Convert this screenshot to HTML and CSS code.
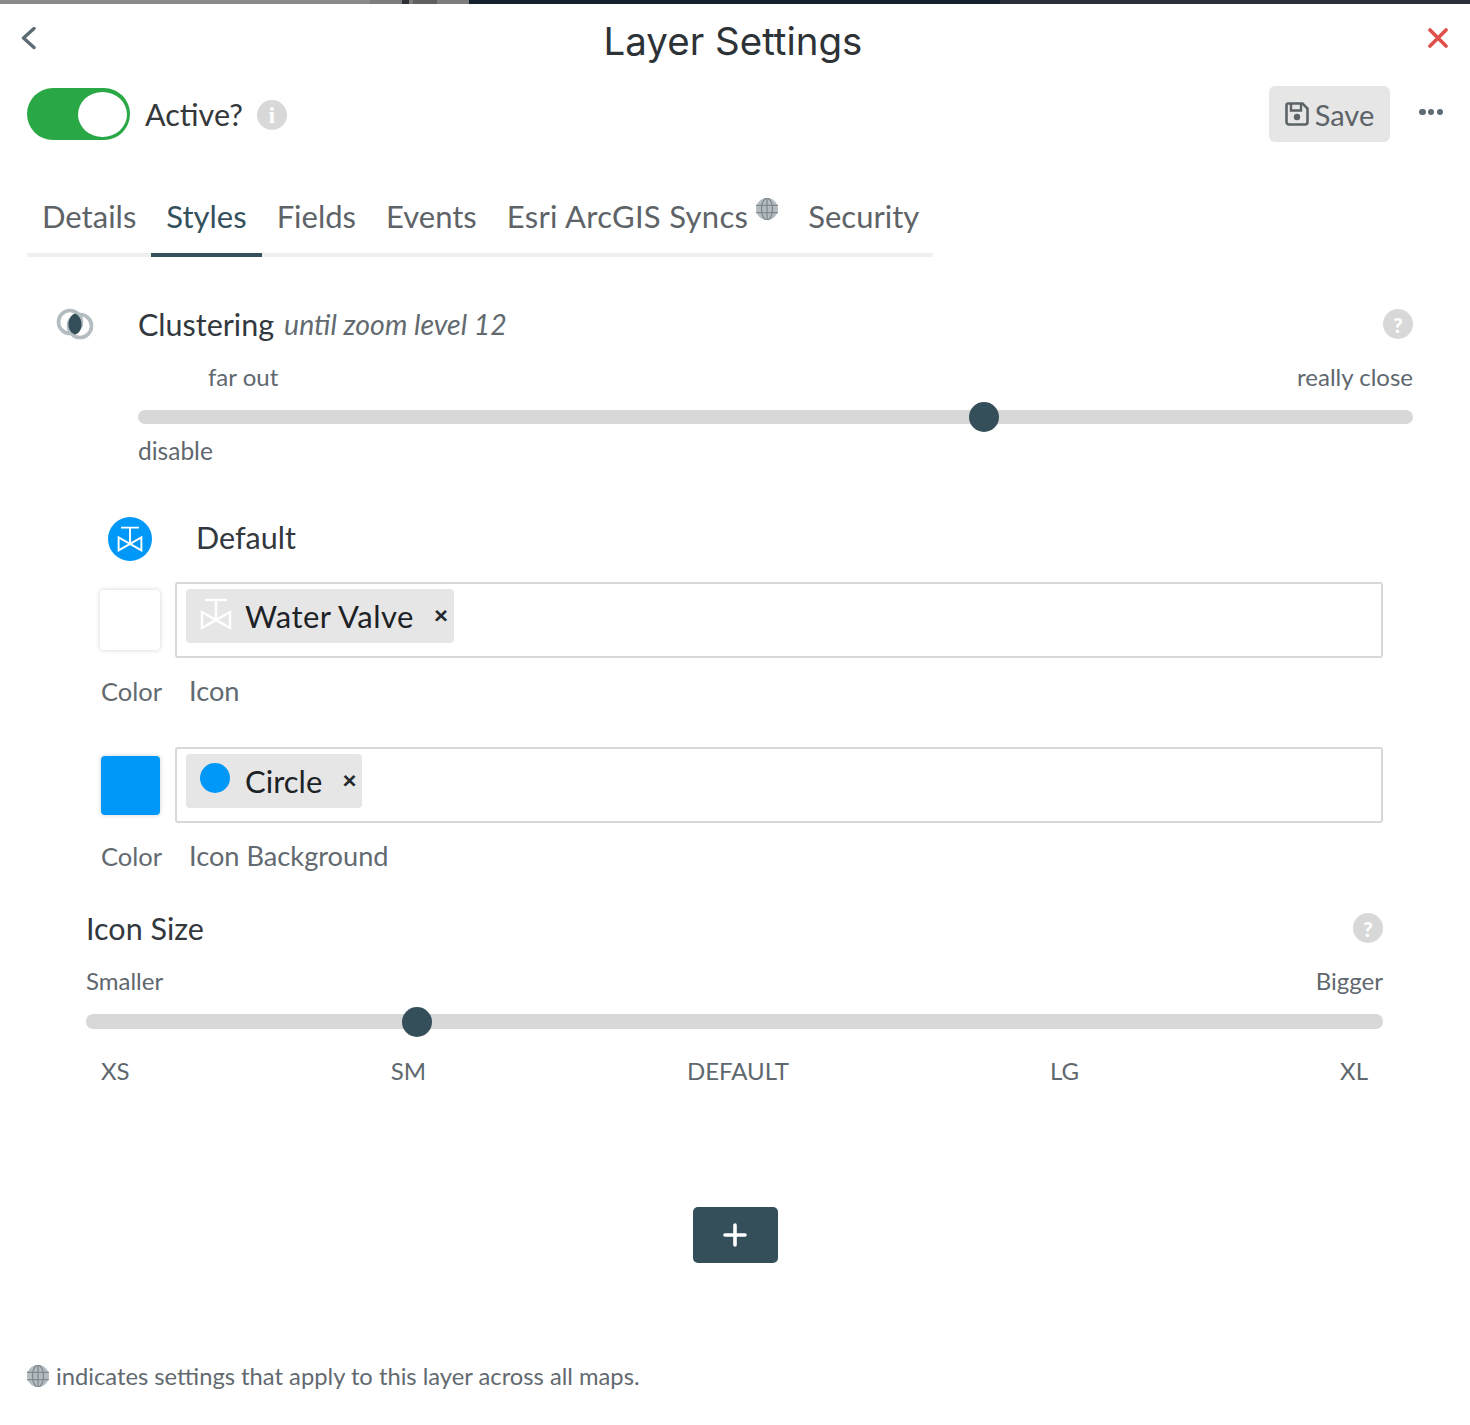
FILE: index.html
```html
<!DOCTYPE html>
<html lang="en">
<head>
<meta charset="utf-8">
<title>Layer Settings</title>
<link rel="stylesheet" href="styles.css">
</head>
<body>
<svg class="defs" width="0" height="0" aria-hidden="true">
  <symbol id="globe" viewBox="0 0 22 22">
    <circle cx="11" cy="11" r="11" fill="#b4bcc0"/>
    <path d="M0 7.300h22M0 14.700h22M11 0v22" stroke="#7f8a90" stroke-width="1.300" fill="none"/>
    <ellipse cx="11" cy="11" rx="5.500" ry="11" stroke="#7f8a90" stroke-width="1.300" fill="none"/>
  </symbol>
  <symbol id="valve" viewBox="0 0 32 32">
    <path d="M5 2h22M16 2v20M2 14v16l14-8 14 8V14l-14 8z" fill="none" stroke="currentColor" stroke-width="2.400" stroke-linejoin="miter"/>
  </symbol>
</svg>
<div class="strip"></div>
<main class="panel">
  <header class="head">
    <button class="iconbtn back" aria-label="Back">
      <svg width="16" height="24" viewBox="0 0 16 24"><path d="M14 2.500 3.500 12 14 21.500" fill="none" stroke="#5f6b73" stroke-width="3.400" stroke-linecap="round" stroke-linejoin="round"/></svg>
    </button>
    <h1 class="title">Layer Settings</h1>
    <button class="iconbtn close" aria-label="Close">
      <svg width="20" height="20" viewBox="0 0 20 20"><path d="M2 2l16 16M18 2 2 18" fill="none" stroke="#e0504a" stroke-width="3.600" stroke-linecap="round"/></svg>
    </button>
  </header>

  <section class="actions">
    <span class="toggle"><span class="toggle-knob"></span></span>
    <span class="active-label">Active?</span>
    <span class="hint info">i</span>
    <span class="spacer"></span>
    <button class="save">
      <svg width="24" height="24" viewBox="0 0 24 24"><path d="M3 1.500h14.500l5 5V20a2.500 2.500 0 0 1-2.500 2.500H4A2.500 2.500 0 0 1 1.500 20V3A1.500 1.500 0 0 1 3 1.500z" fill="none" stroke="#5c6367" stroke-width="2.600"/><path d="M6 2v6.500h10V2" fill="none" stroke="#5c6367" stroke-width="2.400"/><circle cx="12" cy="15" r="3.200" fill="#5c6367"/></svg>
      Save
    </button>
    <span class="more"><i></i><i></i><i></i></span>
  </section>

  <nav class="tabs">
    <a class="tab">Details</a>
    <a class="tab is-active">Styles</a>
    <a class="tab">Fields</a>
    <a class="tab">Events</a>
    <a class="tab tab-global">Esri ArcGIS Syncs<svg class="tab-globe"><use href="#globe"/></svg></a>
    <a class="tab">Security</a>
  </nav>

  <section class="cluster">
    <div class="cluster-head">
      <svg class="cluster-icon" width="38" height="32" viewBox="0 0 38 32">
        <circle cx="14" cy="14" r="11.500" fill="none" stroke="#b3bcc0" stroke-width="3.600"/>
        <circle cx="24" cy="18" r="11.500" fill="none" stroke="#b3bcc0" stroke-width="3.600"/>
        <path d="M19 5.500C24 8 26 13 25.500 18 24.500 23 22.500 25.500 19 26.500 13.500 24.500 12 19 12.500 14 13.500 9.500 15.500 7 19 5.500z" fill="#344f5a"/>
      </svg>
      <span class="heading">Clustering</span>
      <em class="cluster-note">until zoom level 12</em>
      <span class="spacer"></span>
      <span class="hint">?</span>
    </div>
    <div class="scale-labels cluster-ends"><span>far out</span><span>really close</span></div>
    <div class="slider"><span class="knob" style="left:66.35%"></span></div>
    <div class="small disable">disable</div>
  </section>

  <section class="style-block">
    <div class="default-head">
      <span class="default-icon"><svg width="26" height="26"><use href="#valve"/></svg></span>
      <span class="heading">Default</span>
    </div>

    <div class="pick-row">
      <span class="swatch swatch-white"></span>
      <div class="field">
        <span class="chip"><svg class="chip-valve" width="32" height="32"><use href="#valve"/></svg><span class="chip-text chip-text-wide">Water Valve</span><span class="chip-x">×</span></span>
      </div>
    </div>
    <div class="pick-labels"><span class="pick-color">Color</span><span class="pick-name">Icon</span></div>

    <div class="pick-row second">
      <span class="swatch swatch-blue"></span>
      <div class="field">
        <span class="chip"><span class="chip-dot"></span><span class="chip-text">Circle</span><span class="chip-x">×</span></span>
      </div>
    </div>
    <div class="pick-labels"><span class="pick-color">Color</span><span class="pick-name">Icon Background</span></div>

    <div class="size">
      <div class="size-head"><span class="heading">Icon Size</span><span class="hint">?</span></div>
      <div class="scale-labels size-ends"><span>Smaller</span><span>Bigger</span></div>
      <div class="slider size-slider"><span class="knob" style="left:25.55%"></span></div>
      <div class="ticks"><span>XS</span><span>SM</span><span>DEFAULT</span><span>LG</span><span>XL</span></div>
    </div>
  </section>

  <div class="add-wrap">
    <button class="add" aria-label="Add">
      <svg width="24" height="24" viewBox="0 0 24 24"><path d="M12 2v20M2 12h20" stroke="#fff" stroke-width="3.600" stroke-linecap="round"/></svg>
    </button>
  </div>

  <footer class="note"><svg width="22" height="22"><use href="#globe"/></svg><span>indicates settings that apply to this layer across all maps.</span></footer>
</main>
</body>
</html>
```

FILE: styles.css
```css
* { box-sizing: border-box; }
html, body { margin: 0; padding: 0; background: #fff; }
body { font-family: Lato, "Noto Sans", sans-serif; color: #32383d; width: 1470px; height: 1425px; overflow: hidden; }
.defs { position: absolute; }
button { font: inherit; border: 0; background: none; padding: 0; }

.strip { height: 4px; background: linear-gradient(90deg, #8a8a88 0 370px, #7d7d7c 370px 402px, #2c2f33 402px 409px, #7d7d7c 409px 413px, #5f6062 413px 437px, #7d7d7c 437px 469px, #15202e 469px 1000px, #2c3038 1000px); }
.panel { padding: 0 27px; }

.head { height: 75px; display: flex; align-items: center; justify-content: space-between; margin: 0 -7px 0 -9px; padding-bottom: 1px; }
.iconbtn { display: flex; width: 20px; justify-content: center; }
.back { margin-top: -6px; }
.close { margin-top: -6px; margin-right: 2px; }
.title { margin: 0; font-family: Inter, sans-serif; font-weight: 400; font-size: 38.500px; line-height: 1; color: #2d3236; }

.actions { height: 64px; display: flex; align-items: center; padding-top: 6px; }
.toggle { width: 103px; height: 52px; border-radius: 26px; background: #2aa845; padding: 4px 3px; display: flex; justify-content: flex-end; flex: none; }
.toggle-knob { width: 49px; height: 45px; border-radius: 50%; background: #fff; }
.active-label { font-size: 30.500px; margin-left: 15px; color: #34383b; }
.hint { width: 30px; height: 30px; border-radius: 50%; background: #d8d8d8; color: #fff; font-weight: 900; font-size: 21px; display: flex; align-items: center; justify-content: center; flex: none; }
.info { margin: 2px 0 0 14px; font-family: "Liberation Serif", serif; font-size: 24px; }
.spacer { flex: 1; }
.save { width: 121px; height: 56px; border-radius: 6px; background: #e6e6e6; color: #5c6367; font-size: 29px; line-height: 1; display: flex; align-items: center; justify-content: center; gap: 6px; }
.more { width: 24px; margin: -4px 0 0 29px; display: flex; justify-content: space-between; }
.more i { width: 6.500px; height: 6.500px; border-radius: 50%; background: #5d6b75; }

.tabs { width: 906px; height: 114px; display: flex; align-items: flex-end; border-bottom: 4px solid #eef0f0; }
.tab { position: relative; font-size: 31px; color: #5e6367; padding: 0 15px 17px; margin-bottom: -4px; border-bottom: 4px solid transparent; line-height: 40px; white-space: nowrap; }
.tab.is-active { color: #34505c; border-bottom-color: #34505c; }
.tab-global { padding-right: 45px; letter-spacing: .3px; }
.tab-globe { width: 22px; height: 22px; position: absolute; right: 15px; top: 2px; }

.cluster { padding: 0 30px 0 29px; }
.cluster-head { display: flex; align-items: center; height: 40px; margin-top: 47px; }
.cluster-icon { flex: none; margin-right: 44px; }
.heading { font-size: 30.500px; color: #32383d; }
.cluster-note { font-size: 28.500px; color: #626a70; margin-left: 10px; }
.scale-labels { display: flex; justify-content: space-between; font-size: 24px; color: #5f686e; line-height: 30px; }
.cluster-ends { padding-left: 152px; margin-top: 18px; }
.slider { position: relative; height: 14px; border-radius: 7px; background: #d8d8d8; }
.cluster .slider { margin: 18px 0 0 82px; }
.knob { position: absolute; top: 50%; width: 30px; height: 30px; margin: -15px 0 0 -15px; border-radius: 50%; background: #344f5a; }
.small { font-size: 24.500px; color: #5f686e; line-height: 30px; }
.disable { margin: 12px 0 0 82px; }

.style-block { padding: 0 60px 0 59px; }
.default-head { display: flex; align-items: center; height: 44px; margin-top: 49px; padding-left: 22px; }
.default-icon { width: 44px; height: 44px; border-radius: 50%; background: #0098f8; color: #fff; display: flex; align-items: center; justify-content: center; margin: 4px 44px 0 0; }
.pick-row { display: flex; align-items: center; height: 76px; margin-top: 23px; padding-left: 14px; }
.pick-row.second { margin-top: 39px; }
.swatch { width: 60px; height: 60px; border-radius: 4px; flex: none; margin: 0 15px 0 0; box-shadow: 0 0 5px rgba(0,0,0,.18); }
.swatch-blue { background: #0098f8; width: 59px; height: 59px; margin-left: 1px; }
.swatch-white { background: #fff; }
.field { flex: 1; height: 76px; border: 2px solid #d8d8d8; border-radius: 3px; padding: 5px 9px; display: flex; align-items: flex-start; }
.chip { height: 54px; background: #e6e6e6; border-radius: 4px; display: flex; align-items: center; padding: 0 6px 0 14px; color: #1d2226; font-size: 31px; }
.chip-valve { color: #fff; margin-right: 13px; margin-top: -5px; }
.chip-dot { width: 30px; height: 30px; border-radius: 50%; background: #0098f8; margin-right: 15px; margin-top: -6px; }
.chip-text { margin-right: 20px; }
.chip-text-wide { letter-spacing: .45px; }
.chip-x { font-weight: 900; font-size: 25px; margin-top: -5px; width: 14px; color: #23292d; }
.pick-labels { display: flex; padding-left: 15px; margin-top: 16px; font-size: 26px; line-height: 34px; color: #626a70; }
.pick-color { width: 88px; font-size: 25.500px; }
.pick-name { font-size: 27.200px; }

.size { margin-top: 35px; }
.size-head { display: flex; align-items: center; justify-content: space-between; height: 40px; }
.size-ends { margin-top: 18px; }
.size-slider { margin-top: 18px; height: 15px; }
.ticks { display: flex; justify-content: space-between; padding: 0 15px; margin-top: 27px; font-size: 24px; line-height: 30px; color: #5f686e; }

.add-wrap { display: flex; justify-content: center; margin-top: 121px; }
.add { width: 85px; height: 56px; border-radius: 5px; background: #344f5a; display: flex; align-items: center; justify-content: center; }

.note { display: flex; align-items: center; gap: 7px; margin-top: 98px; font-size: 23.750px; line-height: 30px; color: #626a70; }
```
